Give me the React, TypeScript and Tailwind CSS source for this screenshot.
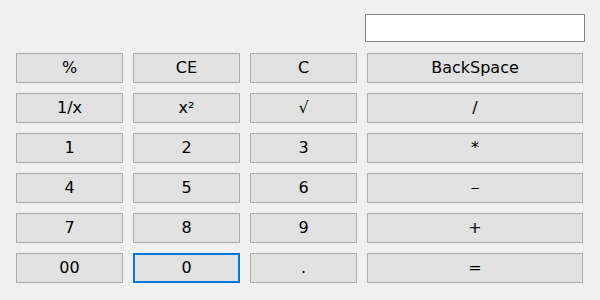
const rows: string[][] = [
  ["%", "CE", "C", "BackSpace"],
  ["1/x", "x²", "√", "/"],
  ["1", "2", "3", "*"],
  ["4", "5", "6", "−"],
  ["7", "8", "9", "+"],
  ["00", "0", ".", "="],
];

export default function App() {
  return (
    <div
      className="w-[600px] h-[300px] bg-[#f0f0f0] pt-[14px] text-[#000000]"
      style={{ fontFamily: '"DejaVu Sans", "Noto Sans CJK JP", sans-serif' }}
    >
      {/* display */}
      <div className="flex justify-end pr-[15px]">
        <input
          type="text"
          readOnly
          className="w-[220px] h-[28px] bg-white border border-[#838383] outline-none px-1 text-[16px]"
        />
      </div>

      {/* keypad */}
      <div className="mt-[11px] pl-[16px] grid grid-cols-[107px_107px_107px_216px] auto-rows-[30px] gap-x-[10px] gap-y-[10px]">
        {rows.flat().map((label, i) => {
          const focused = label === "0";
          return (
            <button
              key={i}
              className={
                focused
                  ? "bg-[#e1e1e1] border-2 border-[#0078d7] text-[16px] leading-none flex items-center justify-center"
                  : "bg-[#e1e1e1] border border-[#adadad] text-[16px] leading-none flex items-center justify-center"
              }
            >
              {label === "−" ? <span className="text-[12px]">{label}</span> : label}
            </button>
          );
        })}
      </div>
    </div>
  );
}
